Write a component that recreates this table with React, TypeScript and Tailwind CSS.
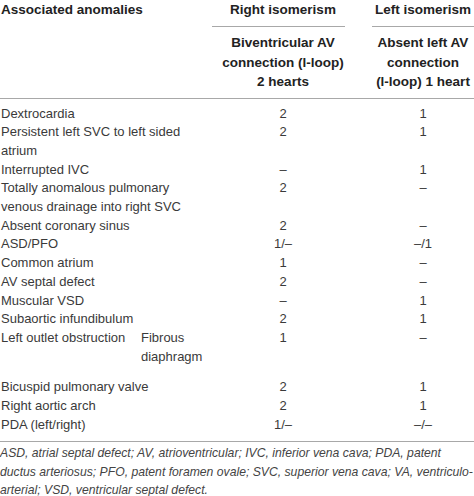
const rows: { name: string[]; sub?: string[]; right: string; left: string; gapBefore?: boolean }[] = [
  { name: ["Dextrocardia"], right: "2", left: "1" },
  { name: ["Persistent left SVC to left sided", "atrium"], right: "2", left: "1" },
  { name: ["Interrupted IVC"], right: "–", left: "1" },
  { name: ["Totally anomalous pulmonary", "venous drainage into right SVC"], right: "2", left: "–" },
  { name: ["Absent coronary sinus"], right: "2", left: "–" },
  { name: ["ASD/PFO"], right: "1/–", left: "–/1" },
  { name: ["Common atrium"], right: "1", left: "–" },
  { name: ["AV septal defect"], right: "2", left: "–" },
  { name: ["Muscular VSD"], right: "–", left: "1" },
  { name: ["Subaortic infundibulum"], right: "2", left: "1" },
  { name: ["Left outlet obstruction"], sub: ["Fibrous", "diaphragm"], right: "1", left: "–" },
  { name: ["Bicuspid pulmonary valve"], right: "2", left: "1", gapBefore: true },
  { name: ["Right aortic arch"], right: "2", left: "1" },
  { name: ["PDA (left/right)"], right: "1/–", left: "–/–" },
];

export default function App() {
  return (
    <div
      className="w-[474px] h-[496px] overflow-hidden bg-white text-[13px] text-[#3a3a3a]"
      style={{ fontFamily: '"Liberation Sans", Arial, sans-serif' }}
    >
      {/* header */}
      <div className="flex font-bold text-[13.5px] text-[#222] leading-[19px]">
        <div className="w-[212px] pl-[1px]">Associated anomalies</div>
        <div className="w-[142px]">
          <div className="text-center">Right isomerism</div>
          <div className="mt-[7px] mr-[9px] border-t border-[#a8a8a8]" />
          <div className="text-center pt-[6px] leading-[19.5px]">
            Biventricular AV
            <br />
            connection (l-loop)
            <br />
            2 hearts
          </div>
        </div>
        <div className="ml-[18px] w-[102px]">
          <div className="text-center">Left isomerism</div>
          <div className="mt-[7px] border-t border-[#a8a8a8]" />
          <div className="text-center pt-[6px] leading-[19.5px] whitespace-nowrap">
            Absent left AV
            <br />
            connection
            <br />
            (l-loop) 1 heart
          </div>
        </div>
      </div>

      <div className="mt-[6px] border-t border-[#a8a8a8]" />

      {/* body */}
      <div className="pt-[6px] pb-[7px] leading-[18.7px]">
        {rows.map((r, i) => (
          <div key={i} className={`flex ${r.gapBefore ? "mt-[12px]" : ""}`}>
            <div className="w-[212px] pl-[1px] flex">
              {r.sub ? (
                <>
                  <div className="w-[140px]">{r.name.join(" ")}</div>
                  <div>
                    {r.sub.map((s) => (
                      <div key={s}>{s}</div>
                    ))}
                  </div>
                </>
              ) : (
                <div>
                  {r.name.map((s) => (
                    <div key={s}>{s}</div>
                  ))}
                </div>
              )}
            </div>
            <div className="w-[142px] text-center">{r.right}</div>
            <div className="ml-[18px] w-[102px] text-center">{r.left}</div>
          </div>
        ))}
      </div>

      <div className="border-t border-[#a8a8a8]" />

      {/* footnote */}
      <div className="pt-[2px] italic text-[12.2px] leading-[18.5px] whitespace-nowrap text-[#444]">
        <div>ASD, atrial septal defect; AV, atrioventricular; IVC, inferior vena cava; PDA, patent</div>
        <div>ductus arteriosus; PFO, patent foramen ovale; SVC, superior vena cava; VA, ventriculo-</div>
        <div>arterial; VSD, ventricular septal defect.</div>
      </div>
    </div>
  );
}
